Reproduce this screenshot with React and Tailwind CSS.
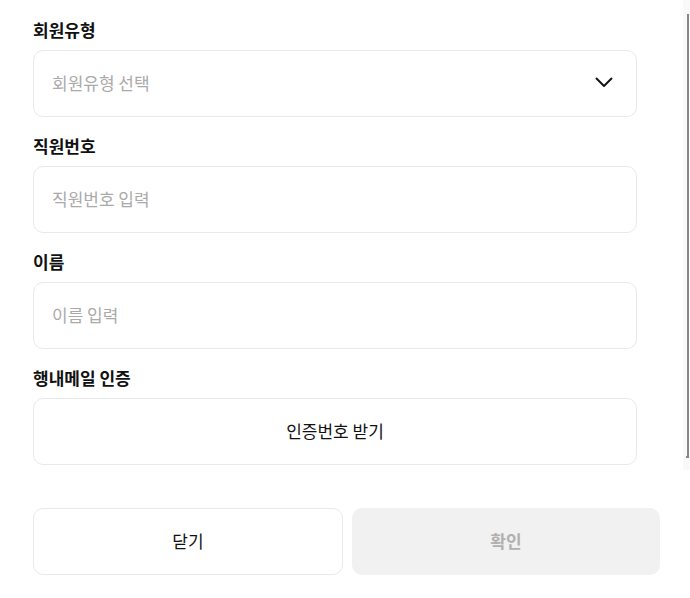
import React from 'react';

const font = { fontFamily: '"Noto Sans CJK KR", "Noto Sans", sans-serif' };

const Field = ({ label, children }) => (
  <div className="mb-[18px]">
    <div className="h-[24px] leading-[22px] mb-[7px] text-[17px] font-bold text-[#111]">{label}</div>
    {children}
  </div>
);

const boxClass =
  'h-[67px] w-full rounded-[10px] border border-[#e9e9e9] bg-white flex items-center text-[17px] leading-[22px] pb-[2px]';

const Chevron = () => (
  <svg width="18" height="11" viewBox="0 0 18 11" fill="none">
    <path d="M1.5 1.5 L9 9 L16.5 1.5" stroke="#111" strokeWidth="1.9" strokeLinecap="round" strokeLinejoin="round" />
  </svg>
);

const App = () => {
  return (
    <div className="w-[690px] h-[598px] bg-white" style={font}>
      <div className="flex">
        {/* scrollable form area */}
        <div className="w-[683px] h-[470px] pl-[33px] pr-[46px] pt-[19px]">
          <Field label="회원유형">
            <div className={`${boxClass} pl-[18px] pr-[23px] justify-between text-[#aaaaaa]`}>
              <span>회원유형 선택</span>
              <Chevron />
            </div>
          </Field>

          <Field label="직원번호">
            <div className={`${boxClass} pl-[18px] text-[#aaaaaa]`}>직원번호 입력</div>
          </Field>

          <Field label="이름">
            <div className={`${boxClass} pl-[18px] text-[#aaaaaa]`}>이름 입력</div>
          </Field>

          <Field label="행내메일 인증">
            <button className={`${boxClass} justify-center font-normal text-[#111]`}>인증번호 받기</button>
          </Field>
        </div>

        {/* scrollbar */}
        <div className="w-[7px] h-[470px] bg-[#f9f9f9] relative">
          <div className="absolute left-[4px] top-[14px] w-[2px] h-[442px] bg-[#888888]" />
          <div className="absolute left-[3px] top-[456px] w-[3px] h-[2px] bg-[#888888]" />
        </div>
      </div>

      {/* footer buttons */}
      <div className="mt-[38px] pl-[33px] pr-[30px] flex gap-[9px]">
        <button className="flex-1 h-[67px] rounded-[10px] border border-[#e9e9e9] bg-white text-[17px] leading-[22px] pb-[2px] font-normal text-[#111]">
          닫기
        </button>
        <button className="flex-1 h-[67px] rounded-[10px] bg-[#f1f1f1] text-[17px] leading-[22px] pb-[2px] font-bold text-[#b0b0b0]">
          확인
        </button>
      </div>
    </div>
  );
};

export default App;
